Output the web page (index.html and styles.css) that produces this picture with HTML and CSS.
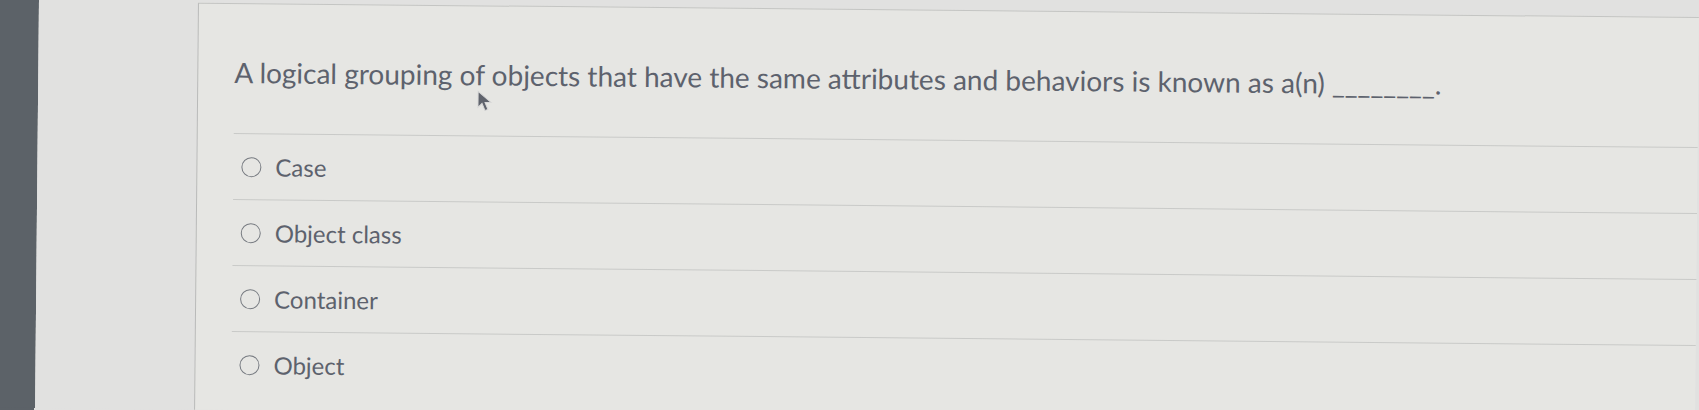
FILE: index.html
```html
<!DOCTYPE html>
<html>
<head>
<meta charset="utf-8">
<link rel="stylesheet" href="styles.css">
</head>
<body>
<div class="screen">
  <div class="strip"></div>
  <div class="gutter"></div>
  <div class="panel">
    <div class="question">A logical grouping of objects that have the same attributes and behaviors is known as a(n) ________.</div>
    <ul class="options">
      <li class="option"><span class="radio"></span><span class="label">Case</span></li>
      <li class="option"><span class="radio"></span><span class="label">Object class</span></li>
      <li class="option"><span class="radio"></span><span class="label">Container</span></li>
      <li class="option"><span class="radio"></span><span class="label">Object</span></li>
    </ul>
    <svg class="cursor" width="16" height="22" viewBox="0 0 16 22"><path d="M1 1 L1 17 L5 13 L8 20 L11 19 L8 12 L14 12 Z" fill="#5f636c" stroke="#d8d8d8" stroke-width="1"/></svg>
  </div>
</div>
</body>
</html>
```
FILE: styles.css
```css
html, body {
  margin: 0;
  padding: 0;
  width: 1699px;
  height: 410px;
  overflow: hidden;
}
body {
  background: linear-gradient(to right, #5c6268 34px, #e1e1e0 34px);
}
.screen {
  display: flex;
  width: 1699px;
  height: 410px;
  transform: rotate(0.55deg);
  transform-origin: 235px 0;
}
.strip {
  width: 39px;
  flex: none;
  background: #5c6268;
}
.gutter {
  width: 159px;
  flex: none;
  background: #e1e1e0;
}
.panel {
  position: relative;
  flex: 1;
  margin-top: 3px;
  border-top: 1px solid #c4c5c3;
  border-left: 1px solid #b9bab9;
  background: #e6e6e3;
  padding-left: 36px;
  font-family: Lato, "Noto Sans", sans-serif;
  color: #5d626d;
}
.question {
  font-size: 28px;
  line-height: 30px;
  padding-top: 53px;
  padding-bottom: 46px;
  white-space: nowrap;
}
.options {
  list-style: none;
  margin: 0;
  padding: 0;
}
.option {
  display: flex;
  align-items: center;
  gap: 14px;
  height: 65px;
  border-top: 1px solid #c9cac8;
  padding-left: 8px;
  font-size: 24px;
}
.radio {
  width: 18px;
  height: 18px;
  border: 1.5px solid #767a80;
  border-radius: 50%;
  flex: none;
}
.cursor {
  position: absolute;
  left: 279px;
  top: 84px;
}
```
